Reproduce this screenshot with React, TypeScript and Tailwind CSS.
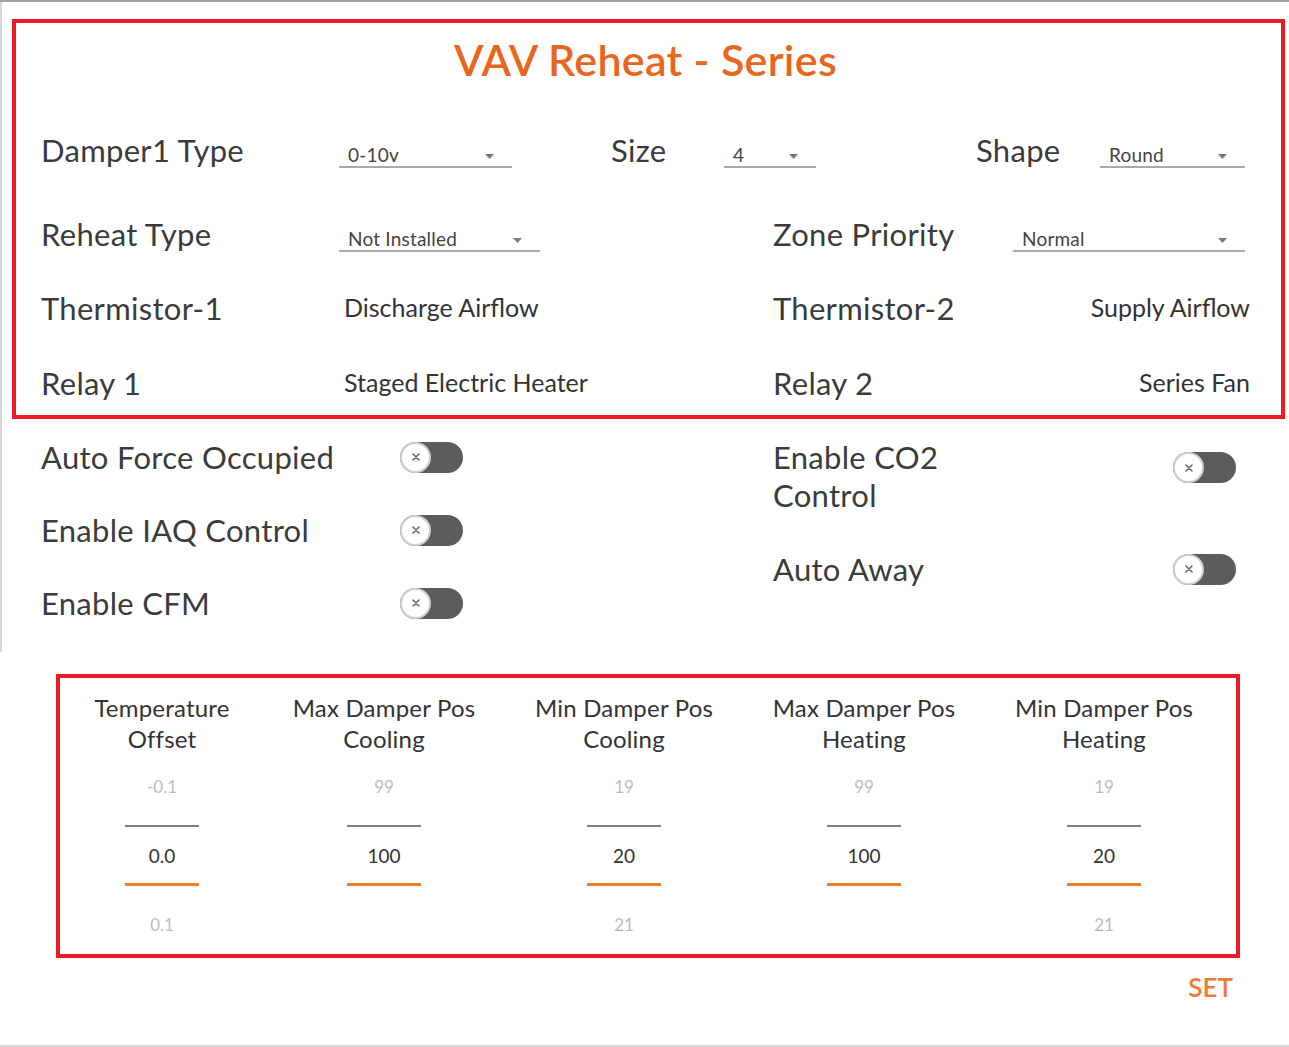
import React from "react"

const font = { fontFamily: "Lato, 'Open Sans', sans-serif" }

function Caret() {
  return (
    <svg width="9" height="5" viewBox="0 0 9 5" className="mb-[7px]">
      <path d="M0 0 L9 0 L4.5 5 Z" fill="#7a7a7a" />
    </svg>
  )
}

function Dropdown({ value, className }: { value: string; className: string }) {
  return (
    <div className={`mt-[14px] h-[22px] border-b-2 border-[#a9a9a9] flex items-end justify-between pl-[9px] pr-[18px] ${className}`}>
      <span className="text-[19px] leading-[22px] text-[#444] tracking-[0.2px]">{value}</span>
      <Caret />
    </div>
  )
}

function Toggle() {
  return (
    <div className="relative w-[63px] h-[31px] rounded-full bg-[#5c5c5c] shrink-0">
      <div className="absolute left-0 top-0 w-[31px] h-[31px] rounded-full bg-white border-2 border-[#d0d0d0] flex items-center justify-center">
        <svg width="8" height="8" viewBox="0 0 8 8">
          <path d="M1 1 L7 7 M7 1 L1 7" stroke="#6a6a6a" strokeWidth="1.6" strokeLinecap="round" />
        </svg>
      </div>
    </div>
  )
}

const pickers = [
  { title: ["Temperature", "Offset"], prev: "-0.1", cur: "0.0", next: "0.1" },
  { title: ["Max Damper Pos", "Cooling"], prev: "99", cur: "100", next: "" },
  { title: ["Min Damper Pos", "Cooling"], prev: "19", cur: "20", next: "21" },
  { title: ["Max Damper Pos", "Heating"], prev: "99", cur: "100", next: "" },
  { title: ["Min Damper Pos", "Heating"], prev: "19", cur: "20", next: "21" },
]

export default function App() {
  const label = "text-[31px] text-[#3b3b3b] leading-[50px] whitespace-nowrap tracking-[0.3px]"
  const value = "text-[25px] text-[#333] whitespace-nowrap"

  return (
    <div style={font} className="w-[1289px] h-[1047px] bg-white border-t-2 border-[#a3a3a3] border-b-2 border-b-[#d6d6d6] flex flex-col">
      {/* top card */}
      <div className="h-[650px] border-l-2 border-[#d8d8d8]">
        <div className="ml-[10px] mt-[17px] w-[1273px] h-[400px] border-4 border-[#ed1c24] pl-[25px] pr-[31px]">
          <div className="mt-[12px] h-[50px] leading-[50px] text-center text-[43px] font-semibold text-[#e8661d] tracking-[0.3px]">
            VAV Reheat - Series
          </div>

          <div className="mt-[40px] h-[50px] flex items-center">
            <div className={`${label} w-[298px]`}>Damper1 Type</div>
            <Dropdown value="0-10v" className="w-[173px]" />
            <div className={`${label} ml-[99px] w-[113px]`}>Size</div>
            <Dropdown value="4" className="w-[92px]" />
            <div className={`${label} ml-[160px] w-[124px]`}>Shape</div>
            <Dropdown value="Round" className="w-[145px]" />
          </div>

          <div className="mt-[34px] h-[50px] grid grid-cols-[298px_434px_240px_1fr] items-center">
            <div className={label}>Reheat Type</div>
            <Dropdown value="Not Installed" className="w-[201px]" />
            <div className={label}>Zone Priority</div>
            <Dropdown value="Normal" className="w-[232px]" />
          </div>

          <div className="mt-[24px] h-[50px] grid grid-cols-[298px_434px_240px_1fr] items-center">
            <div className={label}>Thermistor-1</div>
            <div className={`${value} pl-[5px]`}>Discharge Airflow</div>
            <div className={label}>Thermistor-2</div>
            <div className={`${value} text-right`}>Supply Airflow</div>
          </div>

          <div className="mt-[25px] h-[50px] grid grid-cols-[298px_434px_240px_1fr] items-center">
            <div className={label}>Relay 1</div>
            <div className={`${value} pl-[5px]`}>Staged Electric Heater</div>
            <div className={label}>Relay 2</div>
            <div className={`${value} text-right`}>Series Fan</div>
          </div>
        </div>

        {/* toggles */}
        <div className="flex pl-[39px]">
          <div className="w-[732px] flex flex-col gap-[23px] mt-[13px]">
            {["Auto Force Occupied", "Enable IAQ Control", "Enable CFM"].map((t) => (
              <div key={t} className="h-[50px] flex items-center">
                <div className={`${label} w-[359px]`}>{t}</div>
                <Toggle />
              </div>
            ))}
          </div>
          <div className="flex flex-col">
            <div className="mt-[19px] flex items-start">
              <div className="w-[400px] text-[31px] text-[#3b3b3b] leading-[38px] tracking-[0.3px]">
                Enable CO2
                <br />
                Control
              </div>
              <div className="mt-[14px]">
                <Toggle />
              </div>
            </div>
            <div className="mt-[30px] h-[50px] flex items-center">
              <div className={`${label} w-[400px]`}>Auto Away</div>
              <Toggle />
            </div>
          </div>
        </div>
      </div>

      {/* pickers */}
      <div className="ml-[56px] mt-[22px] w-[1184px] h-[284px] border-4 border-[#ed1c24]">
        <div className="grid grid-cols-[204px_240px_240px_240px_240px] pt-[14px]">
          {pickers.map((p, i) => (
            <div key={i} className="flex flex-col items-center">
              <div className="text-[24px] leading-[31px] text-[#333] text-center whitespace-nowrap tracking-[0.2px]">
                {p.title[0]}
                <br />
                {p.title[1]}
              </div>
              <div className="mt-[21px] h-[24px] leading-[24px] text-[17px] text-[#bdbdbd]">{p.prev}</div>
              <div className="mt-[26px] w-[74px] h-[2px] bg-[#7d7d7d]" />
              <div className="mt-[17px] h-[24px] leading-[24px] text-[19px] text-[#333]">{p.cur}</div>
              <div className="mt-[15px] w-[74px] h-[3px] bg-[#f0822f]" />
              <div className="mt-[27px] h-[24px] leading-[24px] text-[17px] text-[#bdbdbd]">{p.next}</div>
            </div>
          ))}
        </div>
      </div>

      <div className="mt-[14px] h-[30px] leading-[30px] pr-[56px] text-right text-[26px] font-semibold text-[#ee7a33]">
        SET
      </div>
    </div>
  )
}
